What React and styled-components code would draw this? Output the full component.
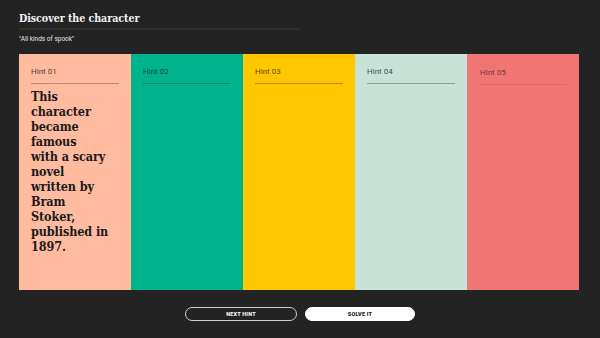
import React from "react";
import styled, { createGlobalStyle } from "styled-components";

const Global = createGlobalStyle`
  html, body { margin: 0; padding: 0; background: #232323; }
  body { width: 600px; height: 338px; overflow: hidden; }
`;

const Page = styled.div`
  width: 600px;
  height: 338px;
  box-sizing: border-box;
  padding: 11px 21px 0 19px;
  display: flex;
  flex-direction: column;
  background: #232323;
  font-family: Roboto, "Liberation Sans", sans-serif;
`;

const Header = styled.div`
  width: 281px;
  border-bottom: 2px solid #303030;
  padding-bottom: 3px;
`;

const Title = styled.h1`
  margin: 0;
  font-family: "DejaVu Serif Condensed", "DejaVu Serif", serif;
  font-stretch: condensed;
  font-weight: bold;
  font-size: 10.6px;
  line-height: 14px;
  color: #f2f2f2;
  letter-spacing: -0.05px;
`;

const Subtitle = styled.p`
  margin: 5px 0 0;
  font-size: 6.5px;
  line-height: 8px;
  color: #e6e6e6;
`;

const Board = styled.div`
  margin-top: 11px;
  height: 236px;
  display: grid;
  grid-template-columns: repeat(5, 112px);
`;

const Card = styled.div`
  background: ${(p) => p.$bg};
  padding: ${(p) => (p.$shift ? "14px 12px 0 13px" : "13px 12px 0 12px")};
  display: flex;
  flex-direction: column;
`;

const Label = styled.div`
  font-size: 8px;
  line-height: 10px;
  color: ${(p) => p.$color};
  padding-bottom: 6px;
  border-bottom: 1px solid ${(p) => p.$line};
`;

const Clue = styled.p`
  margin: 5px 0 0;
  font-family: "DejaVu Serif Condensed", "DejaVu Serif", serif;
  font-stretch: condensed;
  font-weight: bold;
  font-size: 12.5px;
  line-height: 15px;
  color: #1a1a1a;
  letter-spacing: -0.1px;
`;

const Actions = styled.div`
  margin-top: 17px;
  display: flex;
  justify-content: center;
  gap: 8px;
  padding-left: 2px;
`;

const Button = styled.button`
  width: ${(p) => p.$w}px;
  height: 14px;
  box-sizing: border-box;
  border-radius: 8px;
  border: 1px solid ${(p) => (p.$solid ? "#ffffff" : "#cfcfcf")};
  background: ${(p) => (p.$solid ? "#ffffff" : "transparent")};
  color: ${(p) => (p.$solid ? "#222" : "#f0f0f0")};
  font-family: Roboto, "Liberation Sans", sans-serif;
  font-weight: 900;
  font-size: 5.5px;
  letter-spacing: 0.2px;
  padding: 0;
  display: flex;
  align-items: center;
  justify-content: center;
`;

const hints = [
  { bg: "#ffbba0", color: "#5a4038", line: "#b98b78" },
  { bg: "#00b38d", color: "#0f4a3c", line: "#0a8467" },
  { bg: "#ffc700", color: "#5e4a05", line: "#b08a10" },
  { bg: "#c8e2d8", color: "#48524e", line: "#8ea29a" },
  { bg: "#f07575", color: "#743a3a", line: "#dd6a6a", shift: true },
];

const clueLines = [
  "This",
  "character",
  "became",
  "famous",
  "with a scary",
  "novel",
  "written by",
  "Bram",
  "Stoker,",
  "published in",
  "1897.",
];

export default function App() {
  return (
    <>
      <Global />
      <Page>
        <Header>
          <Title>Discover the character</Title>
        </Header>
        <Subtitle>"All kinds of spook"</Subtitle>
        <Board>
          {hints.map((h, i) => (
            <Card key={i} $bg={h.bg} $shift={h.shift}>
              <Label $color={h.color} $line={h.line}>
                Hint 0{i + 1}
              </Label>
              {i === 0 && (
                <Clue>
                  {clueLines.map((l, j) => (
                    <React.Fragment key={j}>
                      {l}
                      {j < clueLines.length - 1 && <br />}
                    </React.Fragment>
                  ))}
                </Clue>
              )}
            </Card>
          ))}
        </Board>
        <Actions>
          <Button $w={112}>NEXT HINT</Button>
          <Button $w={110} $solid>
            SOLVE IT
          </Button>
        </Actions>
      </Page>
    </>
  );
}
